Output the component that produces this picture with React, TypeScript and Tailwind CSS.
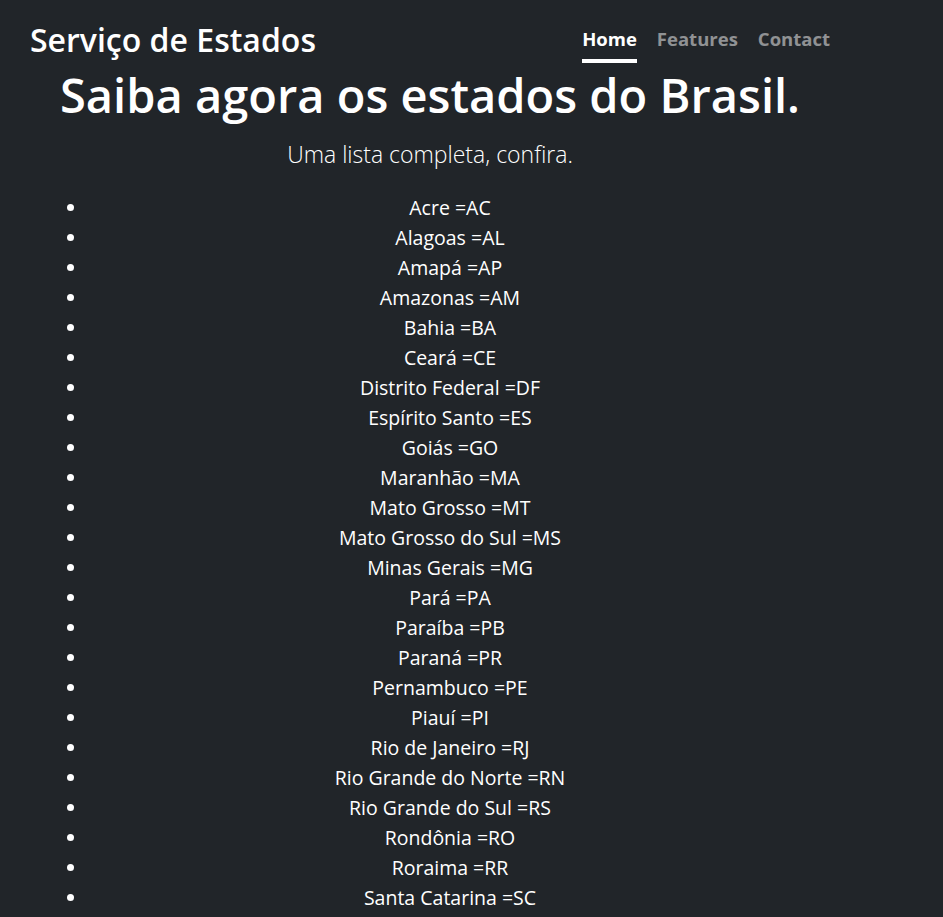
const estados = [
  ['Acre', 'AC'],
  ['Alagoas', 'AL'],
  ['Amapá', 'AP'],
  ['Amazonas', 'AM'],
  ['Bahia', 'BA'],
  ['Ceará', 'CE'],
  ['Distrito Federal', 'DF'],
  ['Espírito Santo', 'ES'],
  ['Goiás', 'GO'],
  ['Maranhão', 'MA'],
  ['Mato Grosso', 'MT'],
  ['Mato Grosso do Sul', 'MS'],
  ['Minas Gerais', 'MG'],
  ['Pará', 'PA'],
  ['Paraíba', 'PB'],
  ['Paraná', 'PR'],
  ['Pernambuco', 'PE'],
  ['Piauí', 'PI'],
  ['Rio de Janeiro', 'RJ'],
  ['Rio Grande do Norte', 'RN'],
  ['Rio Grande do Sul', 'RS'],
  ['Rondônia', 'RO'],
  ['Roraima', 'RR'],
  ['Santa Catarina', 'SC'],
  ['São Paulo', 'SP'],
  ['Sergipe', 'SE'],
  ['Tocantins', 'TO'],
]

export default function App() {
  return (
    <div className="min-h-screen bg-[#212529] text-white font-['Segoe_UI','Open_Sans',sans-serif]">
      <header className="w-[800px] ml-[30px] flex items-start justify-between">
        <h3 className="mt-[20px] text-[32px] leading-[40px] font-semibold">Serviço de Estados</h3>
        <nav className="mt-[27px] flex gap-5 text-[18.5px] leading-[24px] font-bold">
          <a href="#" className="pb-[8px] border-b-4 border-white text-white">Home</a>
          <a href="#" className="pb-[8px] border-b-4 border-transparent text-white/50">Features</a>
          <a href="#" className="pb-[8px] border-b-4 border-transparent text-white/50">Contact</a>
        </nav>
      </header>

      <main className="w-[800px] ml-[30px] text-center">
        <h1 className="mt-[4px] text-[47px] leading-[56px] font-semibold">Saiba agora os estados do Brasil.</h1>
        <p className="mt-[15px] text-[23px] leading-[32px] font-light">Uma lista completa, confira.</p>
        <ul className="mt-[23px] mx-[18px] pl-[40px] list-disc list-outside text-[19.5px] leading-[30px]">
          {estados.map(([nome, sigla]) => (
            <li key={sigla}>
              {nome} ={sigla}
            </li>
          ))}
        </ul>
      </main>
    </div>
  )
}
